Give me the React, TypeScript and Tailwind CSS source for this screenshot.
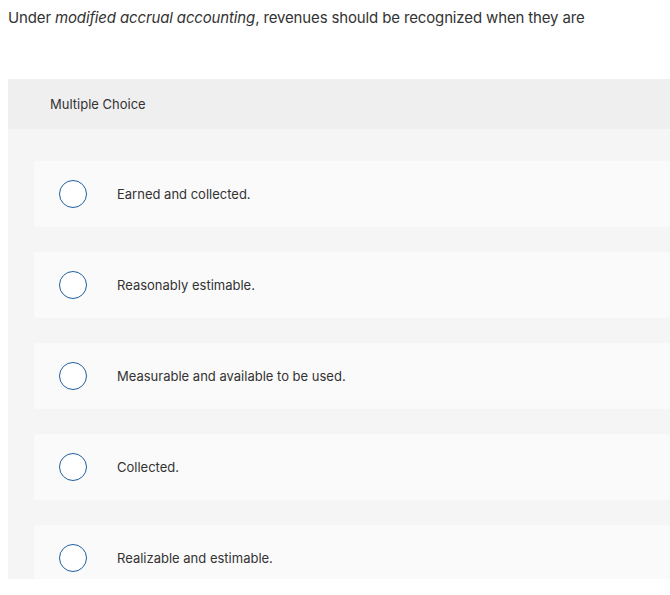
import React from "react";

const options = [
  "Earned and collected.",
  "Reasonably estimable.",
  "Measurable and available to be used.",
  "Collected.",
  "Realizable and estimable.",
];

export default function App() {
  return (
    <div
      className="min-h-[595px] w-[670px] overflow-hidden bg-white text-[#333]"
      style={{ fontFamily: "Inter, 'Liberation Sans', sans-serif" }}
    >
      <p className="px-2 pt-[8px] text-[15px] leading-[20px] tracking-[-0.14px]">
        Under <em>modified accrual accounting</em>, revenues should be
        recognized when they are
      </p>

      <div className="ml-2 mt-[51px] h-[500px] overflow-hidden bg-[#f5f5f5]">
        <div className="flex h-[50px] items-center bg-[#efefef] pl-[42px] pt-[1px] text-[13px]">
          Multiple Choice
        </div>
        <div className="flex flex-col gap-[25px] pl-[26px] pt-[32px]">
          {options.map((label) => (
            <div
              key={label}
              className="flex h-[66px] shrink-0 items-center rounded-[3px] bg-[#fafafa]"
            >
              <span className="ml-[25px] h-[28px] w-[28px] shrink-0 rounded-full border-[1.5px] border-[#1f5f9e] bg-white" />
              <span className="ml-[30px] pt-[1px] text-[13px]">{label}</span>
            </div>
          ))}
        </div>
      </div>
    </div>
  );
}
